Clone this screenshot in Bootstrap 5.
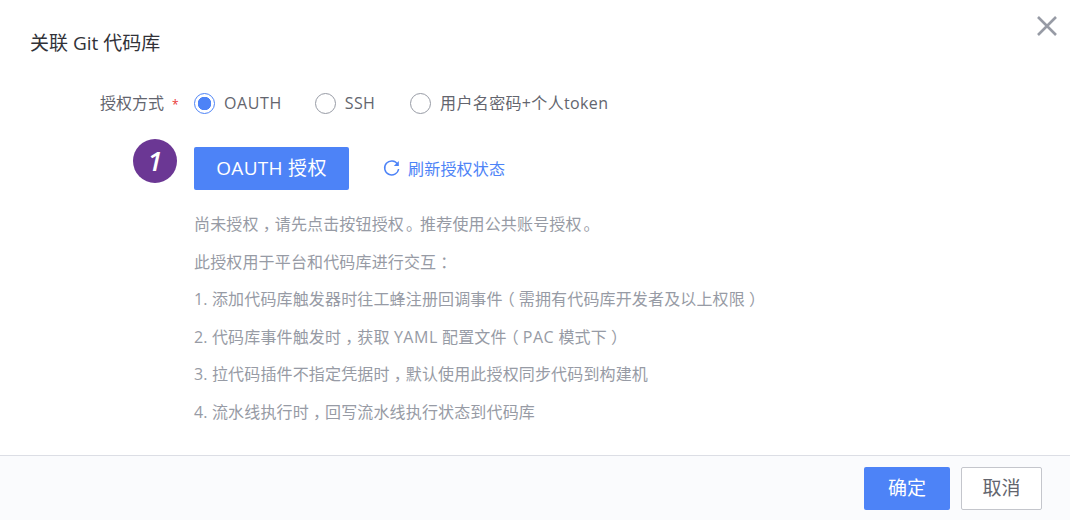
<!DOCTYPE html>
<html lang="zh">
<head>
<meta charset="utf-8">
<title>关联 Git 代码库</title>
<link href="https://cdn.jsdelivr.net/npm/bootstrap@5.3.0/dist/css/bootstrap.min.css" rel="stylesheet">
<style>
html,body{height:520px;overflow:hidden;background:#fff}
body{font-family:"Open Sans","Noto Sans CJK SC",sans-serif;color:#63656e;font-size:16px}
.dlg{height:520px;position:relative}
.dlg-close{position:absolute;left:1036px;top:12px;width:22px;height:22px;padding:0;border:0;background:none;display:block}
.dlg-title{height:87px;padding:30px 0 0 30px;font-size:19px;line-height:26px;color:#313238}
.dlg-body{height:368px;padding-left:100px}
.auth-row{height:33px}
.auth-label{width:94px;line-height:33px;color:#63656e;white-space:nowrap}
.req{color:#ea3636;font-size:12px;margin-left:8px}
.rd{display:flex;align-items:center;gap:9px;line-height:33px;margin:0 0 0 33px}
.rd-dot{width:21px;height:21px;border-radius:50%;border:1.5px solid #979ba5;background:#fff;display:block;flex:none}
.rd-dot.on{border-color:#4d83f7;background:radial-gradient(circle,#4d83f7 0,#4d83f7 6.5px,#fff 7px)}
.rd-first{margin-left:0;letter-spacing:.6px}
.rd-ssh{letter-spacing:.3px}
.rd-user{letter-spacing:.35px;margin-left:35px}
.action-row{margin-top:27px;height:43px;padding-left:94px;position:relative}
.step-mark{position:absolute;left:33px;top:-8px;width:44px;height:44px;border-radius:50%;background:#6b3794;color:#fff;font:italic 600 27px/44px "Open Sans",sans-serif;text-align:center}
.btn-main{background:#4d83f7;border:0;color:#fff;border-radius:2px;height:43px;font-size:19px;line-height:43px;padding:0}
.btn-oauth{width:155px;letter-spacing:.3px}
.refresh{color:#4d83f7;margin-left:33px;gap:7px;text-decoration:none;font-size:16px;letter-spacing:.2px}
.help{margin:16px 0 0 94px;color:#979ba5;font-size:16px;line-height:37.6px}
.help p{margin:0;letter-spacing:.15px}
.pun{display:inline-block;width:16.15px;text-align:center;letter-spacing:0;font-feature-settings:"halt"}
.pun-stop{text-align:left;padding-left:2px}
.lat{letter-spacing:.5px}
.dlg-foot{height:65px;background:#fafbfd;border-top:1px solid #dcdee5;padding:11px 28px 0 0;gap:11px}
.btn-ok{width:86px}
.btn-no{width:81px;height:43px;padding:0;background:#fff;border:1px solid #c4c6cc;border-radius:2px;color:#63656e;font-size:19px;line-height:41px}
</style>
</head>
<body>
<div class="dlg">
<button class="dlg-close" type="button" aria-label="关闭"><svg width="22" height="22" viewBox="0 0 22 22"><path d="M2 2L20 20M20 2L2 20" stroke="#979ba5" stroke-width="2.6" fill="none"/></svg></button>
<div class="dlg-title">关联 Git 代码库</div>
<div class="dlg-body">
<div class="auth-row d-flex">
<div class="auth-label">授权方式<span class="req">*</span></div>
<label class="rd rd-first"><span class="rd-dot on"></span>OAUTH</label>
<label class="rd rd-ssh"><span class="rd-dot"></span>SSH</label>
<label class="rd rd-user"><span class="rd-dot"></span>用户名密码+个人token</label>
</div>
<div class="action-row d-flex align-items-center">
<span class="step-mark">1</span>
<button class="btn-main btn-oauth" type="button">OAUTH 授权</button>
<a href="#" class="refresh d-inline-flex align-items-center">
<svg width="19" height="19" viewBox="0 0 19 19"><path d="M15.6 5.2A7 7 0 1 0 16.6 10" stroke="#4d83f7" stroke-width="1.5" fill="none"/><path d="M16.8 2v5h-5z" fill="#4d83f7"/></svg>刷新授权状态</a>
</div>
<div class="help">
<p>尚未授权<span class="pun">，</span>请先点击按钮授权<span class="pun pun-stop">。</span>推荐使用公共账号授权<span class="pun pun-stop">。</span></p>
<p>此授权用于平台和代码库进行交互<span class="pun">：</span></p>
<p>1. 添加代码库触发器时往工蜂注册回调事件<span class="pun">（</span>需拥有代码库开发者及以上权限<span class="pun">）</span></p>
<p>2. 代码库事件触发时<span class="pun">，</span>获取 <span class="lat">YAML</span> 配置文件<span class="pun">（</span><span class="lat">PAC</span> 模式下<span class="pun">）</span></p>
<p>3. 拉代码插件不指定凭据时<span class="pun">，</span>默认使用此授权同步代码到构建机</p>
<p>4. 流水线执行时<span class="pun">，</span>回写流水线执行状态到代码库</p>
</div>
</div>
<div class="dlg-foot d-flex justify-content-end">
<button class="btn-main btn-ok" type="button">确定</button>
<button class="btn-no" type="button">取消</button>
</div>
</div>
<script src="https://cdn.jsdelivr.net/npm/bootstrap@5.3.0/dist/js/bootstrap.bundle.min.js"></script>
</body>
</html>
